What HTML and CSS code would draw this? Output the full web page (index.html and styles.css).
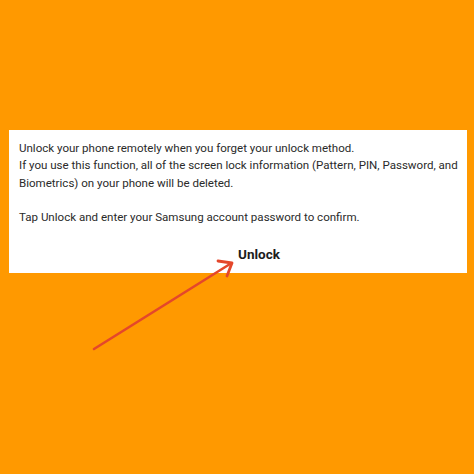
FILE: index.html
```html
<!DOCTYPE html>
<html lang="en">
<head>
    <meta charset="UTF-8">
    <title>Unlock</title>
    <link rel="stylesheet" href="styles.css">
</head>
<body>
    <div class="page">
        <div class="card">
            <p>Unlock your phone remotely when you forget your unlock method.<br>
            If you use this function, all of the screen lock information (Pattern, PIN, Password, and Biometrics) on your phone will be deleted.</p>
            <p class="confirm">Tap Unlock and enter your Samsung account password to confirm.</p>
            <div class="unlock">Unlock</div>
        </div>
        <svg class="arrow" width="474" height="474" viewBox="0 0 474 474">
            <line x1="94" y1="349" x2="230" y2="264" stroke="#e4472b" stroke-width="2.6" stroke-linecap="round"/>
            <polyline points="218,261 232,263 227,276" fill="none" stroke="#e4472b" stroke-width="2.8" stroke-linecap="round" stroke-linejoin="round"/>
        </svg>
    </div>
</body>
</html>
```
FILE: styles.css
```css
html, body {
    margin: 0;
    padding: 0;
}

.page {
    position: relative;
    width: 474px;
    height: 474px;
    background: #ff9900;
    padding-top: 130px;
    box-sizing: border-box;
}

.card {
    margin-left: 9px;
    width: 458px;
    height: 143px;
    box-sizing: border-box;
    background: #fff;
    padding: 10px 8px 0 10px;
    font-family: Roboto, "Liberation Sans", sans-serif;
    font-size: 11.55px;
    line-height: 17.3px;
    color: #2a2a2a;
}

.card p {
    margin: 0;
}

.confirm {
    margin-top: 17px !important;
}

.unlock {
    margin-top: 20px;
    text-align: center;
    font-weight: bold;
    font-size: 13.5px;
    color: #1c1c1c;
    padding-left: 40px;
}

.arrow {
    position: absolute;
    left: 0;
    top: 0;
}
```
